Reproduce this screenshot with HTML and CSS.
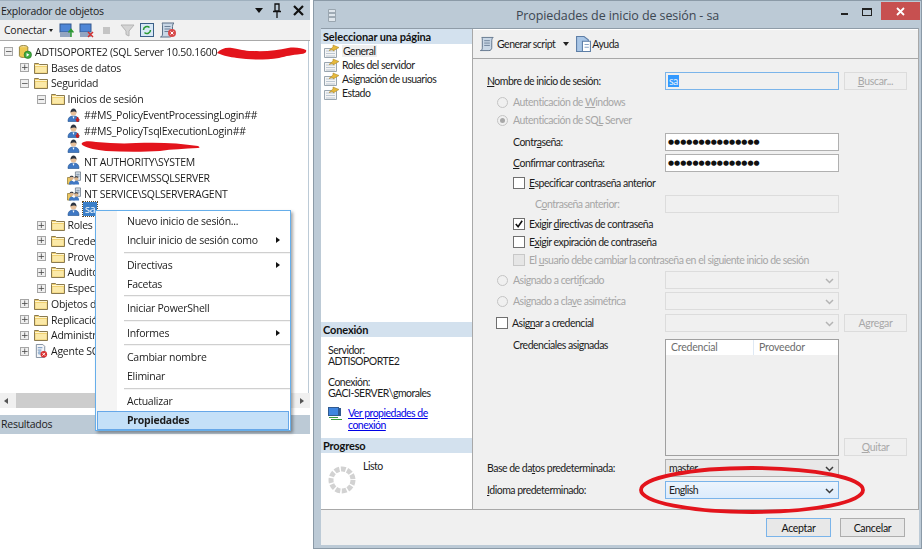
FILE: index.html
```html
<!DOCTYPE html>
<html lang="es">

<head>
    <meta charset="UTF-8">
    <title>Propiedades de inicio de sesión - sa</title>
    <link rel="stylesheet" href="styles.css">
</head>

<body>
    <!-- iconos -->
    <svg class="defs" width="0" height="0">
        <defs>
            <symbol id="folder" viewBox="0 0 14 12">
                <path d="M.5 2.500V1.500h4l1 1h8v9H.5z" fill="#f0d070" stroke="#8a7a50"/>
                <path d="M1.500 5h11v5.500h-11z" fill="#fbe9a8"/>
                <path d="M1 3.500h12" stroke="#fff6d0"/>
            </symbol>
            <symbol id="login" viewBox="0 0 14 14">
                <path d="M1 13.500c0-4 2-5.500 5.500-5.500S12 9.500 12 13.500z" fill="#3f78c4" stroke="#20508f" stroke-width=".6"/>
                <path d="M5.500 8.500l1 2.500 1-2.500z" fill="#fff"/>
                <circle cx="6.500" cy="4.500" r="3" fill="#e8c09a"/>
                <path d="M3.500 4.500c0-2.500 1.500-4 3-4s3 1.500 3 4c-1-1.500-4-1.500-6 0z" fill="#2c3440"/>
            </symbol>
            <symbol id="login-down" viewBox="0 0 14 14">
                <use href="#login"/>
                <path d="M10.500 9v2.500M9 11l1.500 2.500L12 11" stroke="#c81e1e" stroke-width="1.500" fill="none"/>
            </symbol>
            <symbol id="service" viewBox="0 0 15 14">
                <path d="M9 .5h5.500v9H9z" fill="#dfe6ee" stroke="#607080" stroke-width=".8"/>
                <path d="M10 3h3.500M10 5h3.500" stroke="#7088a0"/>
                <path d="M.5 6.500h4v7h-4z" fill="#eec860" stroke="#907830" stroke-width=".8"/>
                <path d="M2 14c0-2.500 1-4 3-4s3 1.500 3 4z" fill="#3f78c4"/>
                <circle cx="5" cy="7" r="2.200" fill="#dcb48c"/>
                <path d="M2.800 6.500c0-2.500 4.400-2.500 4.400 0-2-1-2.500-1-4.400 0z" fill="#2c3440"/>
                <path d="M7 14c0-2.500 1-4 3-4s3 1.500 3 4z" fill="#3f78c4"/>
                <circle cx="10" cy="7.500" r="2.200" fill="#dcb48c"/>
                <path d="M7.800 7c0-2.500 4.400-2.500 4.400 0-2-1-2.500-1-4.400 0z" fill="#2c3440"/>
            </symbol>
            <symbol id="server" viewBox="0 0 15 15">
                <ellipse cx="6" cy="2.500" rx="4.500" ry="2" fill="#f2dc90" stroke="#90803c"/>
                <path d="M1.500 2.500v9c0 2.500 9 2.500 9 0v-9" fill="#ecc850" stroke="#90803c"/>
                <circle cx="10.500" cy="10.500" r="4" fill="#3eaa3e" stroke="#1d6d1d" stroke-width=".6"/>
                <path d="M9.200 8.500v4l3-2z" fill="#fff"/>
            </symbol>
            <symbol id="agent" viewBox="0 0 15 15">
                <path d="M2.500.5h7l2 2v12h-9z" fill="#f4f5f8" stroke="#7d8a9a"/>
                <path d="M4 4h5M4 6.500h4" stroke="#5e88b8"/>
                <circle cx="6" cy="9.500" r="2" fill="#9db8d4"/>
                <circle cx="10.500" cy="11" r="3.500" fill="#d83030"/>
                <path d="M9 9.500l3 3m0-3l-3 3" stroke="#fff"/>
            </symbol>
            <symbol id="page" viewBox="0 0 17 14">
                <path d="M.5 4.500h12v9H.5z" fill="#f5f5f5" stroke="#9aa6b0"/>
                <path d="M2 7h9M2 9.500h9M2 12h9" stroke="#bcc7d2"/>
                <path d="M5 6.500l4-3.500V1l6 2.500L9 7V5.500z" fill="#e6b93c" stroke="#a57f1d" stroke-width=".5"/>
            </symbol>
            <symbol id="scroll" viewBox="0 0 18 16">
                <path d="M3 1h12c-1.500 1-1.500 3-1.500 5v6c0 1.500-1 3-3 3H1.500c1.500-.5 2-1.500 2-3V4C3.500 3 3.500 1.500 3 1z" fill="#c9d7e6" stroke="#5c7188"/>
                <path d="M5.500 4.500h6M5.500 7h6M5.500 9.500h6" stroke="#6c8098"/>
            </symbol>
            <symbol id="chevron" viewBox="0 0 9 6">
                <path d="M1 1l3.500 3.500L8 1" fill="none" stroke="currentColor" stroke-width="1.500"/>
            </symbol>
        </defs>
    </svg>

    <!-- explorador de objetos -->
    <div class="explorer">
        <div class="pane-title">
            <span class="pane-name">Explorador de objetos</span>
            <span class="pane-caret"></span>
            <svg class="pane-pin" viewBox="0 0 10 15" width="10" height="15"><path d="M3 1h4v7H3zM1 8.500h8M5 9v6M7 1v7" fill="none" stroke="#111" stroke-width="1.300"/></svg>
            <svg class="pane-close" viewBox="0 0 11 11" width="11" height="11"><path d="M1 1l9 9M10 1l-9 9" stroke="#111" stroke-width="2.200"/></svg>
        </div>
        <div class="pane-tools">
            <span class="tool-connect">Conectar</span>
            <span class="tool-caret"></span>
            <svg class="tool-icon" viewBox="0 0 15 15" width="15" height="15"><rect x="1" y="1" width="11" height="8" fill="#4f86d6" stroke="#34588f"/><path d="M1 11h11M1 13h11" stroke="#34588f"/><path d="M12 14V7m-2.500 2.500L12 6.500l2.500 3" fill="none" stroke="#2c9a30" stroke-width="1.500"/></svg>
            <svg class="tool-icon" viewBox="0 0 15 15" width="15" height="15"><rect x="1" y="1" width="11" height="8" fill="#4f86d6" stroke="#34588f"/><path d="M1 11h11M1 13h11" stroke="#34588f"/><path d="M9 9l5 5m0-5l-5 5" stroke="#d03030" stroke-width="1.500"/></svg>
            <span class="tool-stop"></span>
            <svg class="tool-icon" viewBox="0 0 15 15" width="15" height="15"><path d="M1 2h13L9 8v5l-3-1.500V8z" fill="#d4d4d4" stroke="#b4b4b4"/></svg>
            <svg class="tool-icon" viewBox="0 0 14 14" width="14" height="14"><rect x=".5" y=".5" width="13" height="13" fill="#d8e8f6" stroke="#3a5f88"/><path d="M3.500 7a3.500 3.500 0 016-2.500m1 2.500a3.500 3.500 0 01-6 2.500" fill="none" stroke="#2b9a33" stroke-width="1.500"/></svg>
            <svg class="tool-icon" viewBox="0 0 18 16" width="18" height="16"><use href="#scroll"/><circle cx="13" cy="11" r="4" fill="#d84a4a"/><path d="M11.500 9.500l3 3m0-3l-3 3" stroke="#fff"/></svg>
        </div>
        <div class="tree">
            <div class="node lv0"><span class="box">−</span><svg class="ico"><use href="#server"/></svg><span>ADTISOPORTE2 (SQL Server 10.50.1600</span></div>
            <div class="node lv1"><span class="box">+</span><svg class="ico"><use href="#folder"/></svg><span>Bases de datos</span></div>
            <div class="node lv1"><span class="box">−</span><svg class="ico"><use href="#folder"/></svg><span>Seguridad</span></div>
            <div class="node lv2"><span class="box">−</span><svg class="ico"><use href="#folder"/></svg><span>Inicios de sesión</span></div>
            <div class="node lv3"><span class="box none"></span><svg class="ico"><use href="#login-down"/></svg><span>##MS_PolicyEventProcessingLogin##</span></div>
            <div class="node lv3"><span class="box none"></span><svg class="ico"><use href="#login-down"/></svg><span>##MS_PolicyTsqlExecutionLogin##</span></div>
            <div class="node lv3"><span class="box none"></span><svg class="ico"><use href="#login"/></svg></div>
            <div class="node lv3"><span class="box none"></span><svg class="ico"><use href="#login"/></svg><span>NT AUTHORITY\SYSTEM</span></div>
            <div class="node lv3"><span class="box none"></span><svg class="ico"><use href="#service"/></svg><span>NT SERVICE\MSSQLSERVER</span></div>
            <div class="node lv3"><span class="box none"></span><svg class="ico"><use href="#service"/></svg><span>NT SERVICE\SQLSERVERAGENT</span></div>
            <div class="node lv3"><span class="box none"></span><svg class="ico"><use href="#login"/></svg><span class="picked">sa</span></div>
            <div class="node lv2"><span class="box">+</span><svg class="ico"><use href="#folder"/></svg><span>Roles de servidor</span></div>
            <div class="node lv2"><span class="box">+</span><svg class="ico"><use href="#folder"/></svg><span>Credenciales</span></div>
            <div class="node lv2"><span class="box">+</span><svg class="ico"><use href="#folder"/></svg><span>Proveedores</span></div>
            <div class="node lv2"><span class="box">+</span><svg class="ico"><use href="#folder"/></svg><span>Auditorías</span></div>
            <div class="node lv2"><span class="box">+</span><svg class="ico"><use href="#folder"/></svg><span>Especificaciones</span></div>
            <div class="node lv1"><span class="box">+</span><svg class="ico"><use href="#folder"/></svg><span>Objetos de servidor</span></div>
            <div class="node lv1"><span class="box">+</span><svg class="ico"><use href="#folder"/></svg><span>Replicación</span></div>
            <div class="node lv1"><span class="box">+</span><svg class="ico"><use href="#folder"/></svg><span>Administración</span></div>
            <div class="node lv1"><span class="box">+</span><svg class="ico"><use href="#agent"/></svg><span>Agente SQL Server</span></div>
        </div>
        <div class="hscroll">
            <span class="arrow-left"></span>
            <span class="hscroll-thumb"></span>
            <span class="arrow-right"></span>
        </div>
        <div class="results">Resultados</div>
    </div>

    <!-- ventana de propiedades -->
    <div class="dialog">
        <div class="dialog-title">
            <svg class="dialog-icon" viewBox="0 0 8 13" width="8" height="13"><path d="M.5.500h7v12h-7z" fill="#dfe6ec" stroke="#9aa6b0"/><path d="M1 4h6M1 8h6" stroke="#60707e"/></svg>
            <span class="dialog-name">Propiedades de inicio de sesión - sa</span>
            <span class="btn-min"></span>
            <span class="btn-max"></span>
            <span class="btn-close">
                <svg viewBox="0 0 9 9" width="9" height="9"><path d="M1 1l7 7M8 1L1 8" stroke="#fff" stroke-width="1.800"/></svg>
            </span>
        </div>
        <div class="dialog-main">
            <div class="side">
                <div class="side-head">Seleccionar una página</div>
                <div class="side-pages">
                    <div class="side-page"><svg class="page-ico"><use href="#page"/></svg><span class="current">General</span></div>
                    <div class="side-page"><svg class="page-ico"><use href="#page"/></svg><span>Roles del servidor</span></div>
                    <div class="side-page"><svg class="page-ico"><use href="#page"/></svg><span>Asignación de usuarios</span></div>
                    <div class="side-page"><svg class="page-ico"><use href="#page"/></svg><span>Estado</span></div>
                </div>
                <div class="side-head">Conexión</div>
                <div class="side-conn">
                    <p>Servidor:<br>ADTISOPORTE2</p>
                    <p>Conexión:<br>GACI-SERVER\gmorales</p>
                    <div class="conn-link">
                        <svg viewBox="0 0 15 14" width="15" height="14"><rect x=".5" y=".5" width="10" height="8" fill="#3f86e0" stroke="#305a90"/><path d="M1 10.500h9M3 12.500h11" stroke="#3c9a40"/><path d="M12 1v8" stroke="#305a90" stroke-width="2"/></svg>
                        <a href="#">Ver propiedades de conexión</a>
                    </div>
                </div>
                <div class="side-head">Progreso</div>
                <div class="side-progress">
                    <svg viewBox="0 0 28 28" width="28" height="28"><circle cx="14" cy="14" r="11" fill="none" stroke="#d2d2d2" stroke-width="5" stroke-dasharray="4.800 1.500"/></svg>
                    <span>Listo</span>
                </div>
            </div>
            <div class="content">
                <div class="toolbar">
                    <svg class="script-ico" viewBox="0 0 18 16" width="17" height="16"><use href="#scroll"/></svg>
                    <span>Generar script</span>
                    <span class="tool-caret dark"></span>
                    <svg class="help-ico" viewBox="0 0 14 15" width="15" height="16"><path d="M.5.500h7l4 3v11H.5z" fill="#a9c6e6" stroke="#5d7ea6"/><path d="M6 5h7.500v9.500H6z" fill="#fff" stroke="#5d7ea6"/><path d="M8 8h4M8 10.500h4" stroke="#8aa5c5"/></svg>
                    <span>Ayuda</span>
                </div>
                <div class="form">
                    <div class="row">
                        <label><u>N</u>ombre de inicio de sesión:</label>
                        <div class="field focus"><span class="sel">sa</span></div>
                        <button class="btn off"><u>B</u>uscar...</button>
                    </div>
                    <div class="row off-text gap3">
                        <label class="check"><span class="radio"></span><span>Autenticación de <u>W</u>indows</span></label>
                    </div>
                    <div class="row off-text">
                        <label class="check"><span class="radio on"></span><span>Autenticación de SQ<u>L</u> Server</span></label>
                    </div>
                    <div class="row gap4">
                        <label class="in">Contr<u>a</u>seña:</label>
                        <div class="field white dots">●●●●●●●●●●●●●●●</div>
                    </div>
                    <div class="row gap3">
                        <label class="in"><u>C</u>onfirmar contraseña:</label>
                        <div class="field white dots">●●●●●●●●●●●●●●●</div>
                    </div>
                    <div class="row gap2">
                        <label class="check in wide"><span class="tick"></span><span><u>E</u>specificar contraseña anterior</span></label>
                    </div>
                    <div class="row off-text gap3">
                        <label class="in deep">C<u>o</u>ntraseña anterior:</label>
                        <div class="field"></div>
                    </div>
                    <div class="row gap2">
                        <label class="check in wide"><span class="tick on"><svg viewBox="0 0 11 11" width="10" height="10"><path d="M2 5.500l2.500 3L9 2" fill="none" stroke="#111" stroke-width="1.800"/></svg></span><span>Exigir <u>d</u>irectivas de contraseña</span></label>
                    </div>
                    <div class="row">
                        <label class="check in wide"><span class="tick"></span><span>E<u>x</u>igir expiración de contraseña</span></label>
                    </div>
                    <div class="row off-text">
                        <label class="check in wide"><span class="tick grey"></span><span>El <u>u</u>suario debe cambiar la contraseña en el siguiente inicio de sesión</span></label>
                    </div>
                    <div class="row off-text gap2">
                        <label class="check"><span class="radio"></span><span>Asignado a certi<u>f</u>icado</span></label>
                        <div class="field combo"><svg class="chev"><use href="#chevron"/></svg></div>
                    </div>
                    <div class="row off-text gap3">
                        <label class="check"><span class="radio"></span><span>Asignado a cla<u>v</u>e asimétrica</span></label>
                        <div class="field combo"><svg class="chev"><use href="#chevron"/></svg></div>
                    </div>
                    <div class="row gap4">
                        <label class="check"><span class="tick first"></span><span>Asig<u>n</u>ar a credencial</span></label>
                        <div class="field combo"><svg class="chev"><use href="#chevron"/></svg></div>
                        <button class="btn off">A<u>g</u>regar</button>
                    </div>
                    <div class="row list-row">
                        <label class="in">Credenciales asignadas</label>
                        <div class="list">
                            <div class="list-head"><span>Credencial</span><span>Proveedor</span></div>
                        </div>
                        <button class="btn off"><u>Q</u>uitar</button>
                    </div>
                    <div class="row gap3">
                        <label>Base de da<u>t</u>os predeterminada:</label>
                        <div class="field combo live">master<svg class="chev"><use href="#chevron"/></svg></div>
                    </div>
                    <div class="row gap4">
                        <label><u>I</u>dioma predeterminado:</label>
                        <div class="field combo live hot">English<svg class="chev"><use href="#chevron"/></svg></div>
                    </div>
                </div>
            </div>
        </div>
        <div class="dialog-foot">
            <button class="btn main">Aceptar</button>
            <button class="btn">Cancelar</button>
        </div>
    </div>

    <!-- menú contextual -->
    <div class="menu">
        <div class="menu-item">Nuevo inicio de sesión...</div>
        <div class="menu-item more">Incluir inicio de sesión como</div>
        <hr>
        <div class="menu-item more">Directivas</div>
        <div class="menu-item">Facetas</div>
        <hr>
        <div class="menu-item">Iniciar PowerShell</div>
        <hr>
        <div class="menu-item more">Informes</div>
        <hr>
        <div class="menu-item">Cambiar nombre</div>
        <div class="menu-item">Eliminar</div>
        <hr>
        <div class="menu-item">Actualizar</div>
        <div class="menu-item active">Propiedades</div>
    </div>

    <!-- marcas en rojo sobre la captura -->
    <svg class="marks" viewBox="0 0 922 549" width="922" height="549">
        <path d="M217 53c3-4 9-6 15-5 8 1 12 3 20 3 14 1 26-1 36-3 7-1 14 0 18 2 1 2-1 4-5 4-10 1-14 2-22 4-14 2-30 2-42 0-8-1-12-2-20-5z" fill="#e3141c"/>
        <path d="M82 143c2-2 8-2 14-1 14 1 26 2 40 1 22-1 44 0 62 3 2 1 2 2 0 2-14 1-26 1-38 3-16 1-36 1-54 0-10-1-18-3-22-5-2-1-3-2-2-3z" fill="#e3141c"/>
        <ellipse cx="752" cy="490" rx="111" ry="22" fill="none" stroke="#e3141c" stroke-width="3.800"/>
    </svg>
</body>

</html>
```

FILE: styles.css
```css
html, body {
    margin: 0;
    padding: 0;
    height: 549px;
    overflow: hidden;
}

body {
    position: relative;
    display: flex;
    gap: 3px;
    width: 922px;
    background: #fff;
    font-family: "Open Sans", "Noto Sans", sans-serif;
    font-size: 10.5px;
    letter-spacing: -0.25px;
    color: #1c1c1c;
    filter: blur(0.35px);
}

.defs {
    position: absolute;
}

/* explorador */
.explorer {
    width: 310px;
    height: 549px;
    flex: none;
    display: flex;
    flex-direction: column;
}

.pane-title {
    height: 20px;
    flex: none;
    display: flex;
    align-items: center;
    padding: 0 6px 0 1px;
    background: #bccad6;
    box-sizing: border-box;
    border-top: 1px solid #9fb0be;
}

.pane-name {
    flex: 1;
}

.pane-caret {
    width: 0;
    height: 0;
    border: 4.500px solid transparent;
    border-top: 5px solid #111;
    border-bottom: 0;
    margin-right: 9px;
}

.pane-pin {
    margin-right: 11px;
}

.pane-tools {
    height: 21px;
    flex: none;
    display: flex;
    align-items: center;
    padding-left: 4px;
    background: #f1f1f1;
    border-bottom: 1px solid #a9a9a9;
    box-sizing: border-box;
}

.tool-caret {
    width: 0;
    height: 0;
    border: 2.500px solid transparent;
    border-top: 3px solid #222;
    border-bottom: 0;
    margin: 0 6px 0 3px;
}

.tool-caret.dark {
    border-width: 4px 3.500px 0;
    border-top-color: #222;
    margin: 0 7px 0 8px;
}

.tool-icon {
    margin-right: 5px;
}

.tool-stop {
    width: 7px;
    height: 7px;
    background: #c4c4c4;
    margin: 0 10px 0 4px;
}

.tree {
    flex: none;
    height: 352px;
    padding-top: 3px;
    box-sizing: border-box;
    margin-right: 1px;
    border-right: 1px solid #bccad6;
    overflow: hidden;
}

.node {
    height: 15.750px;
    display: flex;
    align-items: center;
    white-space: nowrap;
}

.lv0 { padding-left: 4px; }
.lv1 { padding-left: 20px; }
.lv2 { padding-left: 36.500px; }
.lv3 { padding-left: 53px; }

.box {
    width: 9px;
    height: 9px;
    flex: none;
    border: 1px solid #a6a6a6;
    box-sizing: border-box;
    background: #efefef;
    color: #444;
    font-family: "DejaVu Sans", sans-serif;
    font-size: 9px;
    line-height: 6px;
    text-align: center;
    margin-right: 5px;
}

.box.none {
    visibility: hidden;
}

.ico {
    width: 14px;
    height: 14px;
    flex: none;
    margin-right: 3px;
}

.picked {
    background: #3b7fc8;
    color: #fff;
    padding: 0 2px;
    outline: 1px dotted #5d4a2a;
    margin-left: -1px;
}

.hscroll {
    height: 15px;
    flex: none;
    background: #f0f0f0;
    display: flex;
    align-items: center;
}

.hscroll-thumb {
    width: 84px;
    height: 15px;
    background: #cdcdcd;
    margin: 0 auto 0 8px;
}

.arrow-left, .arrow-right {
    width: 0;
    height: 0;
    border: 3.500px solid transparent;
}

.arrow-left {
    border-right: 4px solid #555;
    border-left: 0;
    margin-left: 4px;
}

.arrow-right {
    border-left: 4px solid #555;
    border-right: 0;
    margin-right: 6px;
}

.results {
    margin-top: 7px;
    height: 19px;
    flex: none;
    background: #bccad6;
    padding-left: 1px;
    line-height: 19px;
}

/* dialogo */
.dialog {
    flex: 1;
    height: 549px;
    box-sizing: border-box;
    display: flex;
    flex-direction: column;
    background: #bccad6;
    border: 1px solid #8b9aa7;
    padding: 0 1px 3px 7px;
    min-width: 0;
    font-family: Lato, "Open Sans", sans-serif;
    font-size: 10.5px;
    letter-spacing: -0.5px;
}

.dialog-title {
    height: 27px;
    flex: none;
    display: flex;
    align-items: flex-start;
    position: relative;
}

.dialog-icon {
    margin: 8px 0 0 7px;
}

.dialog-name {
    position: absolute;
    left: 0;
    right: 6px;
    top: 6px;
    text-align: center;
    font-family: "Open Sans", sans-serif;
    font-size: 12.500px;
    letter-spacing: -0.100px;
    color: #3c4752;
}

.btn-min {
    width: 7px;
    height: 2px;
    background: #222;
    margin: 12px 0 0 auto;
}

.btn-max {
    width: 8px;
    height: 5px;
    border: 1px solid #222;
    border-top-width: 2px;
    margin: 7px 0 0 14px;
}

.btn-close {
    width: 39px;
    height: 18px;
    background: #c75050;
    margin: 1px 0 0 9px;
    display: flex;
    align-items: center;
    justify-content: center;
}

.dialog-main {
    height: 482px;
    flex: none;
    display: flex;
    margin-right: 1px;
    background: #fff;
    border-top: 1px solid #8f9ca8;
    border-right: 1px solid #a8a8a8;
    border-bottom: 1px solid #a8a8a8;
    box-sizing: border-box;
}

.side {
    width: 151px;
    flex: none;
    background: #fff;
    border-right: 1px solid #a8a8a8;
}

.side-head {
    height: 15px;
    line-height: 15px;
    font-size: 11px;
    font-weight: 700;
    letter-spacing: -0.150px;
    padding-left: 2px;
    background: #d3e1ee;
    color: #111;
}

.side-pages {
    height: 278px;
}

.side-page {
    height: 14px;
    display: flex;
    align-items: center;
    padding-left: 3px;
}

.page-ico {
    width: 17px;
    height: 14px;
    flex: none;
    margin-right: 1px;
}

.current {
    background: #efefef;
    padding: 0 1px;
}

.side-conn {
    height: 101px;
    padding: 8px 0 0 7px;
    box-sizing: border-box;
    line-height: 11px;
}

.side-conn p {
    margin: 0 0 10px;
}

.conn-link {
    display: flex;
    gap: 5px;
    line-height: 12px;
    margin-top: -2px;
}

.conn-link svg {
    flex: none;
}

.conn-link a {
    color: #0000e6;
    width: 90px;
}

.side-progress {
    height: 55px;
    display: flex;
    padding: 7px 0 0 7px;
    box-sizing: border-box;
    gap: 7px;
}

.side-progress svg {
    margin-top: 6px;
}

.content {
    flex: 1;
    display: flex;
    flex-direction: column;
    background: #f0f0f0;
    min-width: 0;
}

.toolbar {
    height: 30px;
    flex: none;
    box-sizing: border-box;
    display: flex;
    align-items: center;
    padding-left: 6px;
    border-bottom: 1px solid #a8a8a8;
    border-top: 1px solid #fff;
}

.script-ico {
    margin-right: 1px;
}

.help-ico {
    margin-right: 1px;
}

.form {
    flex: 1;
    padding: 13px 0 0 14px;
    display: flex;
    flex-direction: column;
}

.row {
    display: grid;
    grid-template-columns: 178px 174px 5px 63px;
    align-items: center;
    height: 18px;
}

.gap2 { margin-top: 2px; }
.gap3 { margin-top: 3px; }
.gap4 { margin-top: 4px; }

.row .btn {
    grid-column: 4;
}

.off-text {
    color: #a6a6a6;
}

.check {
    display: flex;
    align-items: center;
    white-space: nowrap;
}

.in {
    padding-left: 26px;
}

.deep {
    padding-left: 48px;
}

.wide {
    grid-column: 1 / -1;
}

.radio {
    width: 11px;
    height: 11px;
    flex: none;
    border: 1px solid #c4c4c4;
    border-radius: 50%;
    box-sizing: border-box;
    margin: 0 5px 0 10px;
    background: #f0f0f0;
    position: relative;
}

.radio.on::after {
    content: "";
    position: absolute;
    left: 2px;
    top: 2px;
    width: 5px;
    height: 5px;
    border-radius: 50%;
    background: #a8a8a8;
}

.tick {
    width: 12px;
    height: 12px;
    flex: none;
    box-sizing: border-box;
    border: 1px solid #6f6f6f;
    background: #fff;
    margin-right: 4px;
    display: flex;
}

.tick.first {
    margin-left: 9px;
}

.tick.grey {
    background: #e6e6e6;
    border-color: #c8c8c8;
}

.field {
    height: 18px;
    box-sizing: border-box;
    border: 1px solid #dcdcdc;
    background: #f0f0f0;
    display: flex;
    align-items: center;
    padding-left: 2px;
    position: relative;
}

.field.white {
    background: #fff;
    border-color: #b0b0b0;
}

.field.focus {
    border-color: #7ab4ea;
}

.sel {
    background: #3399ff;
    color: #e6f0fa;
    padding: 0 1px;
}

.dots {
    font-family: "DejaVu Sans", sans-serif;
    font-size: 7px;
    color: #111;
    letter-spacing: 0;
}

.combo {
    color: #222;
}

.chev {
    position: absolute;
    right: 4px;
    top: 6px;
    width: 9px;
    height: 6px;
    color: #b4b4b4;
}

.combo.live {
    background: #e8e8e8;
    border-color: #b0b0b0;
    padding-left: 3px;
}

.combo.live .chev {
    color: #3c3c3c;
}

.combo.hot {
    background: linear-gradient(#ecf4fc, #dcecfc);
    border-color: #7ab4ea;
}

.btn {
    height: 18px;
    padding: 0;
    box-sizing: border-box;
    font-family: inherit;
    font-size: 10.5px;
    letter-spacing: -0.3px;
    border: 1px solid #adadad;
    background: #e8e8e8;
    color: #111;
}

.btn.off {
    background: #efefef;
    border-color: #dcdcdc;
    color: #a8a8a8;
}

.list-row {
    align-items: start;
    margin-top: 7px;
    height: 117px;
}

.list {
    height: 117px;
    box-sizing: border-box;
    border: 1px solid #a0a0a0;
    background: #f0f0f0;
}

.list-head {
    height: 15px;
    display: grid;
    grid-template-columns: 87px 1fr;
    background: #fff;
    color: #6d6d6d;
    line-height: 15px;
    letter-spacing: -0.2px;
}

.list-head span {
    padding-left: 5px;
}

.list-head span + span {
    border-left: 1px solid #dfe9f4;
}

.list-row .btn {
    align-self: end;
}

.dialog-foot {
    flex: 1;
    display: flex;
    align-items: center;
    justify-content: flex-end;
    gap: 9px;
    padding-right: 14px;
    margin-right: 1px;
    background: #f0f0f0;
}

.dialog-foot .btn {
    width: 65px;
    height: 19px;
}

.dialog-foot .main {
    border-color: #7ab4ea;
}

/* menu */
.menu {
    position: absolute;
    left: 95px;
    top: 210px;
    width: 196px;
    height: 221px;
    box-sizing: border-box;
    border: 1px solid #66aeea;
    background: linear-gradient(to right, #f4f4f4 21px, #fff 21px);
    box-shadow: 2px 2px 3px rgba(0, 0, 0, 0.35);
    padding-top: 1px;
}

.menu-item {
    height: 19px;
    line-height: 19px;
    padding-left: 31px;
    position: relative;
}

.menu-item.more::after {
    content: "";
    position: absolute;
    right: 10px;
    top: 6px;
    border: 3.500px solid transparent;
    border-left: 4px solid #111;
    border-right: 0;
}

.menu hr {
    border: 0;
    border-top: 1px solid #cfcfcf;
    border-bottom: 1px solid #f4f4f4;
    margin: 1.750px 0 1.750px 28px;
}

.menu-item.active {
    font-weight: 700;
    background: #c4e0f8;
    outline: 1px solid #66a7e8;
    outline-offset: -1px;
    margin: 0 1px;
    padding-left: 30px;
}

.marks {
    position: absolute;
    left: 0;
    top: 0;
    pointer-events: none;
}
```
